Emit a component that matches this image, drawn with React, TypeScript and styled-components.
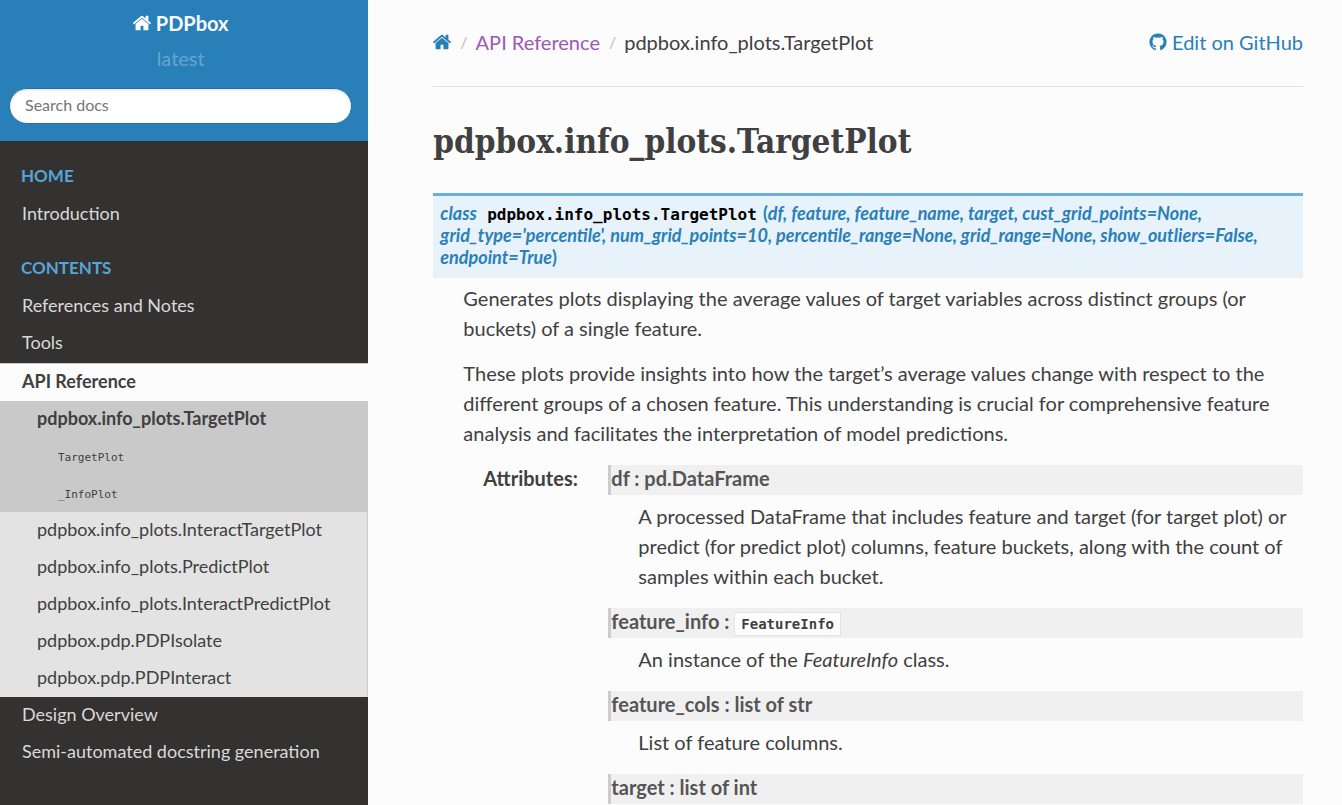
import React from "react";
import styled, { createGlobalStyle, css } from "styled-components";

const sans = `Lato, "Liberation Sans", sans-serif`;
const mono = `"DejaVu Sans Mono", "Liberation Mono", monospace`;
const slab = `"Roboto Slab", "DejaVu Serif Condensed", "DejaVu Serif", serif`;

const GlobalStyle = createGlobalStyle`
  *, *::before, *::after { box-sizing: border-box; }
  body {
    margin: 0;
    background: #fcfcfc;
    color: #404040;
    font: 20px/30px ${sans};
  }
  a { text-decoration: none; }
  ul, ol, dl, dd, p, h1 { margin: 0; padding: 0; }
  ul, ol { list-style: none; }
`;

const Page = styled.div`
  display: flex;
  align-items: stretch;
  min-height: 100vh;
`;

const Sidebar = styled.nav`
  flex: 0 0 368px;
  background: #343131;
`;

const SearchArea = styled.div`
  display: flex;
  flex-direction: column;
  align-items: center;
  padding: 7px 16px 17px 9px;
  background: #2980b9;
`;

const Brand = styled.a`
  display: flex;
  align-items: center;
  gap: 5px;
  line-height: 32px;
  font-weight: 700;
  color: #fcfcfc;
`;

const Version = styled.div`
  margin: 4px 0 15px;
  color: rgba(255, 255, 255, 0.3);
`;

const SearchForm = styled.form`
  width: 100%;
`;

const SearchInput = styled.input`
  display: block;
  width: 100%;
  height: 36px;
  padding: 0 15px 3px;
  border: 1px solid #2472a4;
  border-radius: 50px;
  background: #fff;
  box-shadow: inset 0 1px 3px #ddd;
  font: 16px ${sans};
  color: #404040;
  outline: none;
  &::placeholder { color: #757575; opacity: 1; }
`;

const Caption = styled.p`
  margin-top: 15px;
  padding: 0 21px;
  line-height: 40px;
  font-size: 17px;
  font-weight: 700;
  text-transform: uppercase;
  color: #55a5d9;
`;

const MenuLink = styled.a<{ $current?: boolean }>`
  display: block;
  padding: 0 22px 2px;
  line-height: 35px;
  font-size: 18px;
  color: #d9d9d9;
  ${(p) =>
    p.$current &&
    css`
      margin-top: 1px;
      border-top: 1px solid #c9c9c9;
      background: #fcfcfc;
      font-weight: 700;
      color: #404040;
    `}
`;

const SubLink = styled.a<{ $current?: boolean }>`
  display: block;
  padding: 0 37px 2px;
  border-right: 1px solid #c9c9c9;
  line-height: 35px;
  font-size: 18px;
  font-weight: ${(p) => (p.$current ? 700 : 400)};
  background: ${(p) => (p.$current ? "#c9c9c9" : "#e3e3e3")};
  color: #404040;
`;

const CodeLink = styled.a`
  display: block;
  height: 37px;
  padding: 0 58px;
  background: #c9c9c9;
  font: 11px/39px ${mono};
  color: #404040;
`;

const Content = styled.main`
  flex: 1;
  min-width: 0;
  padding: 27px 39px 0 65px;
`;

const TopBar = styled.div`
  display: flex;
  justify-content: space-between;
  padding-bottom: 29px;
  border-bottom: 1px solid #e1e4e5;
`;

const Crumbs = styled.ol`
  display: flex;
`;

const Crumb = styled.li`
  display: flex;
  align-items: center;
  & + &::before {
    content: "/";
    padding: 0 8px 0 9px;
    font-size: 16px;
    color: #bbb;
  }
`;

const CrumbLink = styled.a<{ $visited?: boolean }>`
  display: flex;
  color: ${(p) => (p.$visited ? "#9b59b6" : "#2980b9")};
`;

const EditLink = styled.a`
  display: flex;
  align-items: center;
  gap: 5px;
  color: #2980b9;
`;

const Title = styled.h1`
  margin: 32px 0 28px;
  font: 700 33px/46px ${slab};
`;

const Signature = styled.div`
  padding: 6px 7px 10px;
  border-top: 3px solid #6ab0de;
  background: #e7f2fa;
  font-size: 18px;
  font-weight: 700;
  line-height: 22px;
  color: #2980b9;
`;

const ObjectName = styled.code`
  padding: 0 6px;
  font: 700 16px/16px ${mono};
  color: #000;
`;

const Description = styled.div`
  padding: 5px 0 0 30px;
`;

const Paragraph = styled.p`
  margin-bottom: 15px;
`;

const Fields = styled.dl`
  display: grid;
  grid-template-columns: 145px minmax(0, 1fr);
  padding-top: 2px;
`;

const FieldName = styled.dt`
  padding-left: 20px;
  font-weight: 700;
  line-height: 26px;
`;

const Term = styled.dt`
  height: 30px;
  margin-bottom: 6px;
  border-left: 3px solid #ccc;
  background: #f0f0f0;
  font-weight: 700;
  line-height: 26px;
  color: #555;
`;

const Details = styled.dd`
  padding: 0 0 17px 30px;
`;

const InlineCode = styled.code`
  padding: 3px 6px;
  border: 1px solid #e1e4e5;
  background: #fff;
  font: 700 14px/16px ${mono};
  color: #404040;
`;

const Glyph = styled.svg`
  display: block;
  fill: currentColor;
`;

const HomeIcon = () => (
  <Glyph width="18" height="20" viewBox="90 0 1612 1792" aria-hidden="true">
    <path d="M1472 992v480q0 26-19 45t-45 19h-384v-384h-256v384h-384q-26 0-45-19t-19-45v-480q0-1 .5-3t.5-3l575-474 575 474q1 2 1 6zm223-69l-62 74q-8 9-21 11h-3q-13 0-21-7l-692-577-692 577q-12 8-24 7-13-2-21-11l-62-74q-8-10-7-23.5t11-21.5l719-599q32-26 76-26t76 26l244 204v-195q0-14 9-23t23-9h192q14 0 23 9t9 23v408l219 182q10 8 11 21.5t-7 23.5z" />
  </Glyph>
);

const GithubIcon = () => (
  <Glyph width="18" height="20" viewBox="90 0 1612 1792" aria-hidden="true">
    <path d="M896 128q209 0 385.5 103t279.5 279.5 103 385.5q0 251-146.5 451.5t-378.5 277.5q-27 5-40-7t-13-30q0-3 .5-76.5t.5-134.5q0-97-52-142 57-6 102.5-18t94-39 81-66.5 53-105 20.5-150.5q0-119-79-206 37-91-8-204-28-9-81 11t-92 44l-38 24q-93-26-192-26t-192 26q-16-11-42.5-27t-83.5-38.5-85-13.5q-45 113-8 204-79 87-79 206 0 85 20.5 150t52.5 105 80.5 67 94 39 102.5 18q-39 36-49 103-21 10-45 15t-57 5-65.5-21.5-55.5-62.5q-19-32-48.5-52t-49.5-24l-20-3q-21 0-29 4.5t-5 11.5 9 14 13 12l7 5q22 10 43.5 38t31.5 51l10 23q13 38 44 61.5t67 30 69.5 7 55.5-3.5l23-4q0 38 .5 88.5t.5 54.5q0 18-13 30t-40 7q-232-77-378.5-277.5t-146.5-451.5q0-209 103-385.5t279.5-279.5 385.5-103z" />
  </Glyph>
);

const siblingPages = [
  "pdpbox.info_plots.InteractTargetPlot",
  "pdpbox.info_plots.PredictPlot",
  "pdpbox.info_plots.InteractPredictPlot",
  "pdpbox.pdp.PDPIsolate",
  "pdpbox.pdp.PDPInteract",
];

const attributes: { term: React.ReactNode; details?: React.ReactNode }[] = [
  {
    term: "df : pd.DataFrame",
    details:
      "A processed DataFrame that includes feature and target (for target plot) or predict (for predict plot) columns, feature buckets, along with the count of samples within each bucket.",
  },
  {
    term: (
      <>
        feature_info : <InlineCode>FeatureInfo</InlineCode>
      </>
    ),
    details: (
      <>
        An instance of the <em>FeatureInfo</em> class.
      </>
    ),
  },
  { term: "feature_cols : list of str", details: "List of feature columns." },
  { term: "target : list of int" },
];

export default function App() {
  return (
    <>
      <GlobalStyle />
      <Page>
        <Sidebar aria-label="Main">
          <SearchArea>
            <Brand href="#">
              <HomeIcon />
              PDPbox
            </Brand>
            <Version>latest</Version>
            <SearchForm role="search">
              <SearchInput type="text" placeholder="Search docs" aria-label="Search docs" />
            </SearchForm>
          </SearchArea>
          <Caption>Home</Caption>
          <ul>
            <li><MenuLink href="#">Introduction</MenuLink></li>
          </ul>
          <Caption>Contents</Caption>
          <ul>
            <li><MenuLink href="#">References and Notes</MenuLink></li>
            <li><MenuLink href="#">Tools</MenuLink></li>
            <li>
              <MenuLink href="#" $current>API Reference</MenuLink>
              <ul>
                <li>
                  <SubLink href="#" $current>pdpbox.info_plots.TargetPlot</SubLink>
                  <ul>
                    <li><CodeLink href="#">TargetPlot</CodeLink></li>
                    <li><CodeLink href="#">_InfoPlot</CodeLink></li>
                  </ul>
                </li>
                {siblingPages.map((name) => (
                  <li key={name}><SubLink href="#">{name}</SubLink></li>
                ))}
              </ul>
            </li>
            <li><MenuLink href="#">Design Overview</MenuLink></li>
            <li><MenuLink href="#">Semi-automated docstring generation</MenuLink></li>
          </ul>
        </Sidebar>

        <Content>
          <TopBar>
            <Crumbs>
              <Crumb><CrumbLink href="#" aria-label="Home"><HomeIcon /></CrumbLink></Crumb>
              <Crumb><CrumbLink href="#" $visited>API Reference</CrumbLink></Crumb>
              <Crumb>pdpbox.info_plots.TargetPlot</Crumb>
            </Crumbs>
            <EditLink href="#">
              <GithubIcon />
              Edit on GitHub
            </EditLink>
          </TopBar>

          <Title>pdpbox.info_plots.TargetPlot</Title>

          <Signature>
            <em>class</em> <ObjectName>pdpbox.info_plots.TargetPlot</ObjectName>(
            <em>
              df, feature, feature_name, target, cust_grid_points=None, grid_type='percentile',
              num_grid_points=10, percentile_range=None, grid_range=None, show_outliers=False,
              endpoint=True
            </em>
            )
          </Signature>

          <Description>
            <Paragraph>
              Generates plots displaying the average values of target variables across distinct
              groups (or buckets) of a single feature.
            </Paragraph>
            <Paragraph>
              These plots provide insights into how the target’s average values change with respect
              to the different groups of a chosen feature. This understanding is crucial for
              comprehensive feature analysis and facilitates the interpretation of model
              predictions.
            </Paragraph>
            <Fields>
              <FieldName>Attributes:</FieldName>
              <dd>
                <dl>
                  {attributes.map(({ term, details }, i) => (
                    <React.Fragment key={i}>
                      <Term>{term}</Term>
                      {details && <Details>{details}</Details>}
                    </React.Fragment>
                  ))}
                </dl>
              </dd>
            </Fields>
          </Description>
        </Content>
      </Page>
    </>
  );
}
